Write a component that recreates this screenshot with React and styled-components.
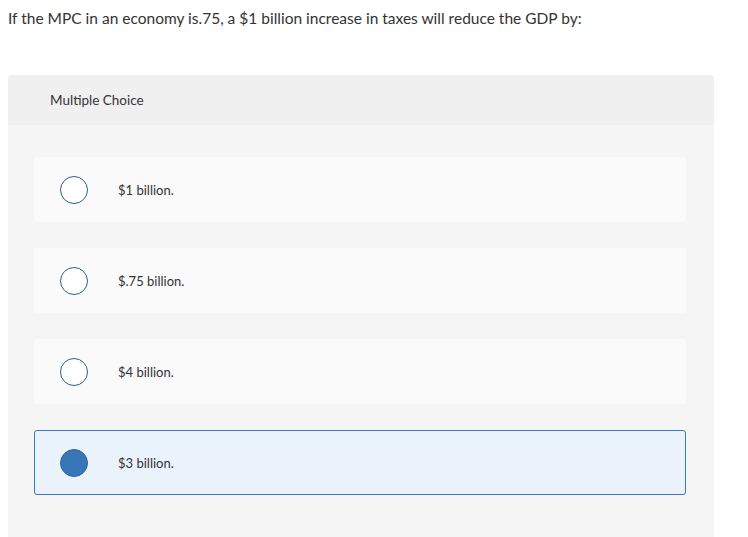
import React, { useState } from 'react';
import styled, { createGlobalStyle } from 'styled-components';

const GlobalStyle = createGlobalStyle`
  body {
    margin: 8px;
    background: #fff;
    font-family: Lato, "Open Sans", sans-serif;
    color: #333;
  }
`;

const Question = styled.p`
  margin: 0 0 47px;
  font-size: 15.5px;
  line-height: 20px;
  color: #333;
`;

const Card = styled.div`
  width: 706px;
  background: #f5f5f5;
  border-radius: 3px 3px 0 0;
  padding-bottom: 60px;
`;

const CardHeader = styled.div`
  height: 50px;
  display: flex;
  align-items: center;
  padding-left: 42px;
  background: #f0f0f0;
  border-radius: 3px 3px 0 0;
  font-size: 13.5px;
  color: #333;
`;

const Options = styled.div`
  display: flex;
  flex-direction: column;
  gap: 26px;
  padding: 32px 28px 0 26px;
`;

const Option = styled.label`
  display: flex;
  align-items: center;
  height: 65px;
  box-sizing: border-box;
  padding-left: 25px;
  border-radius: 3px;
  border: 1px solid ${p => (p.selected ? '#3a78c0' : 'transparent')};
  background: ${p => (p.selected ? '#eaf2fc' : '#fafafa')};
  cursor: pointer;
`;

const Radio = styled.span`
  width: 28px;
  height: 28px;
  box-sizing: border-box;
  border-radius: 50%;
  border: 1.5px solid ${p => (p.selected ? '#2d649f' : '#2f5f8e')};
  background: ${p => (p.selected ? '#3876b8' : '#fff')};
  flex-shrink: 0;
`;

const OptionText = styled.span`
  margin-left: 30px;
  font-size: 13px;
  color: #333;
`;

const choices = ['$1 billion.', '$.75 billion.', '$4 billion.', '$3 billion.'];

export default function App() {
  const [selected, setSelected] = useState(3);
  return (
    <>
      <GlobalStyle />
      <Question>If the MPC in an economy is.75, a $1 billion increase in taxes will reduce the GDP by:</Question>
      <Card>
        <CardHeader>Multiple Choice</CardHeader>
        <Options>
          {choices.map((c, i) => (
            <Option key={c} selected={selected === i} onClick={() => setSelected(i)}>
              <Radio selected={selected === i} />
              <OptionText>{c}</OptionText>
            </Option>
          ))}
        </Options>
      </Card>
    </>
  );
}
